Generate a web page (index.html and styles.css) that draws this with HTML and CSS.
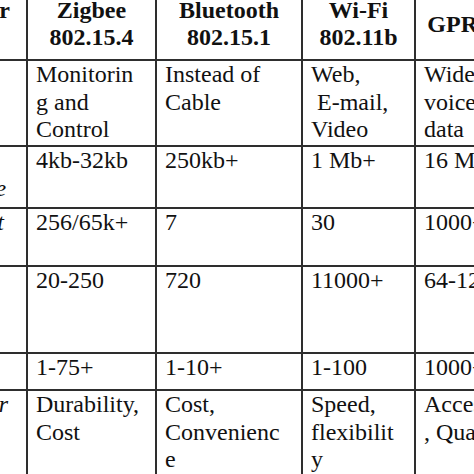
FILE: index.html
```html
<!DOCTYPE html>
<html>
<head>
<meta charset="utf-8">
<link rel="stylesheet" href="styles.css">
</head>
<body>
<div class="sheet">
  <div class="grid">
    <div class="cell c1 head end">Parameter</div>
    <div class="cell head">Zigbee<br>802.15.4</div>
    <div class="cell head">Bluetooth<br>802.15.1</div>
    <div class="cell head">Wi-Fi<br>802.11b</div>
    <div class="cell head mid">GPRS/GSM</div>

    <div class="cell c1">Main<br>Focus</div>
    <div class="cell">Monitorin<br>g and<br>Control</div>
    <div class="cell">Instead of<br>Cable</div>
    <div class="cell">Web,<br>&nbsp;E-mail,<br>Video</div>
    <div class="cell">Wide Area<br>voice &amp;<br>data</div>

    <div class="cell c1">System<br>Resource</div>
    <div class="cell">4kb-32kb</div>
    <div class="cell">250kb+</div>
    <div class="cell">1 Mb+</div>
    <div class="cell">16 Mb+</div>

    <div class="cell c1 end far">Nodes/Net</div>
    <div class="cell">256/65k+</div>
    <div class="cell">7</div>
    <div class="cell">30</div>
    <div class="cell">1000+</div>

    <div class="cell c1">Data<br>Rate<br>(kb/s)</div>
    <div class="cell">20-250</div>
    <div class="cell">720</div>
    <div class="cell">11000+</div>
    <div class="cell">64-128+</div>

    <div class="cell c1">Range</div>
    <div class="cell">1-75+</div>
    <div class="cell">1-10+</div>
    <div class="cell">1-100</div>
    <div class="cell">1000+</div>

    <div class="cell c1 end">Key Factor</div>
    <div class="cell">Durability,<br>Cost</div>
    <div class="cell">Cost,<br>Convenienc<br>e</div>
    <div class="cell">Speed,<br>flexibilit<br>y</div>
    <div class="cell">Access<br>, Quality</div>
  </div>
</div>
</body>
</html>
```

FILE: styles.css
```css
html, body {
  margin: 0;
  padding: 0;
  background: #ffffff;
}

.sheet {
  width: 474px;
  height: 474px;
  overflow: hidden;
}

.grid {
  display: grid;
  grid-template-columns: 130px 129px 146px 113px 150px;
  grid-template-rows: 71px 86px 62px 58px 87px 37px 100px;
  margin: -10px 0 0 -102px;
  width: 668px;
  font-family: "Liberation Serif", "Times New Roman", serif;
  font-size: 24px;
  line-height: 27.6px;
  color: #111111;
}

.cell {
  box-sizing: border-box;
  border-right: 2px solid #2e2e2e;
  border-bottom: 2px solid #2e2e2e;
  padding: 0 4px 0 8px;
  white-space: nowrap;
  overflow: hidden;
}

.c1 {
  text-align: center;
  font-style: italic;
  padding: 0;
}

.c1.end {
  text-align: right;
  padding-right: 18px;
}

.c1.end.far {
  padding-right: 22px;
}

.head {
  font-weight: bold;
  text-align: center;
  line-height: 27px;
  padding: 7px 0 0 0;
  font-style: normal;
}

.head.end {
  text-align: right;
  padding: 7px 16px 0 0;
}

.head.mid {
  display: flex;
  align-items: center;
  justify-content: center;
  padding: 0;
}
```
